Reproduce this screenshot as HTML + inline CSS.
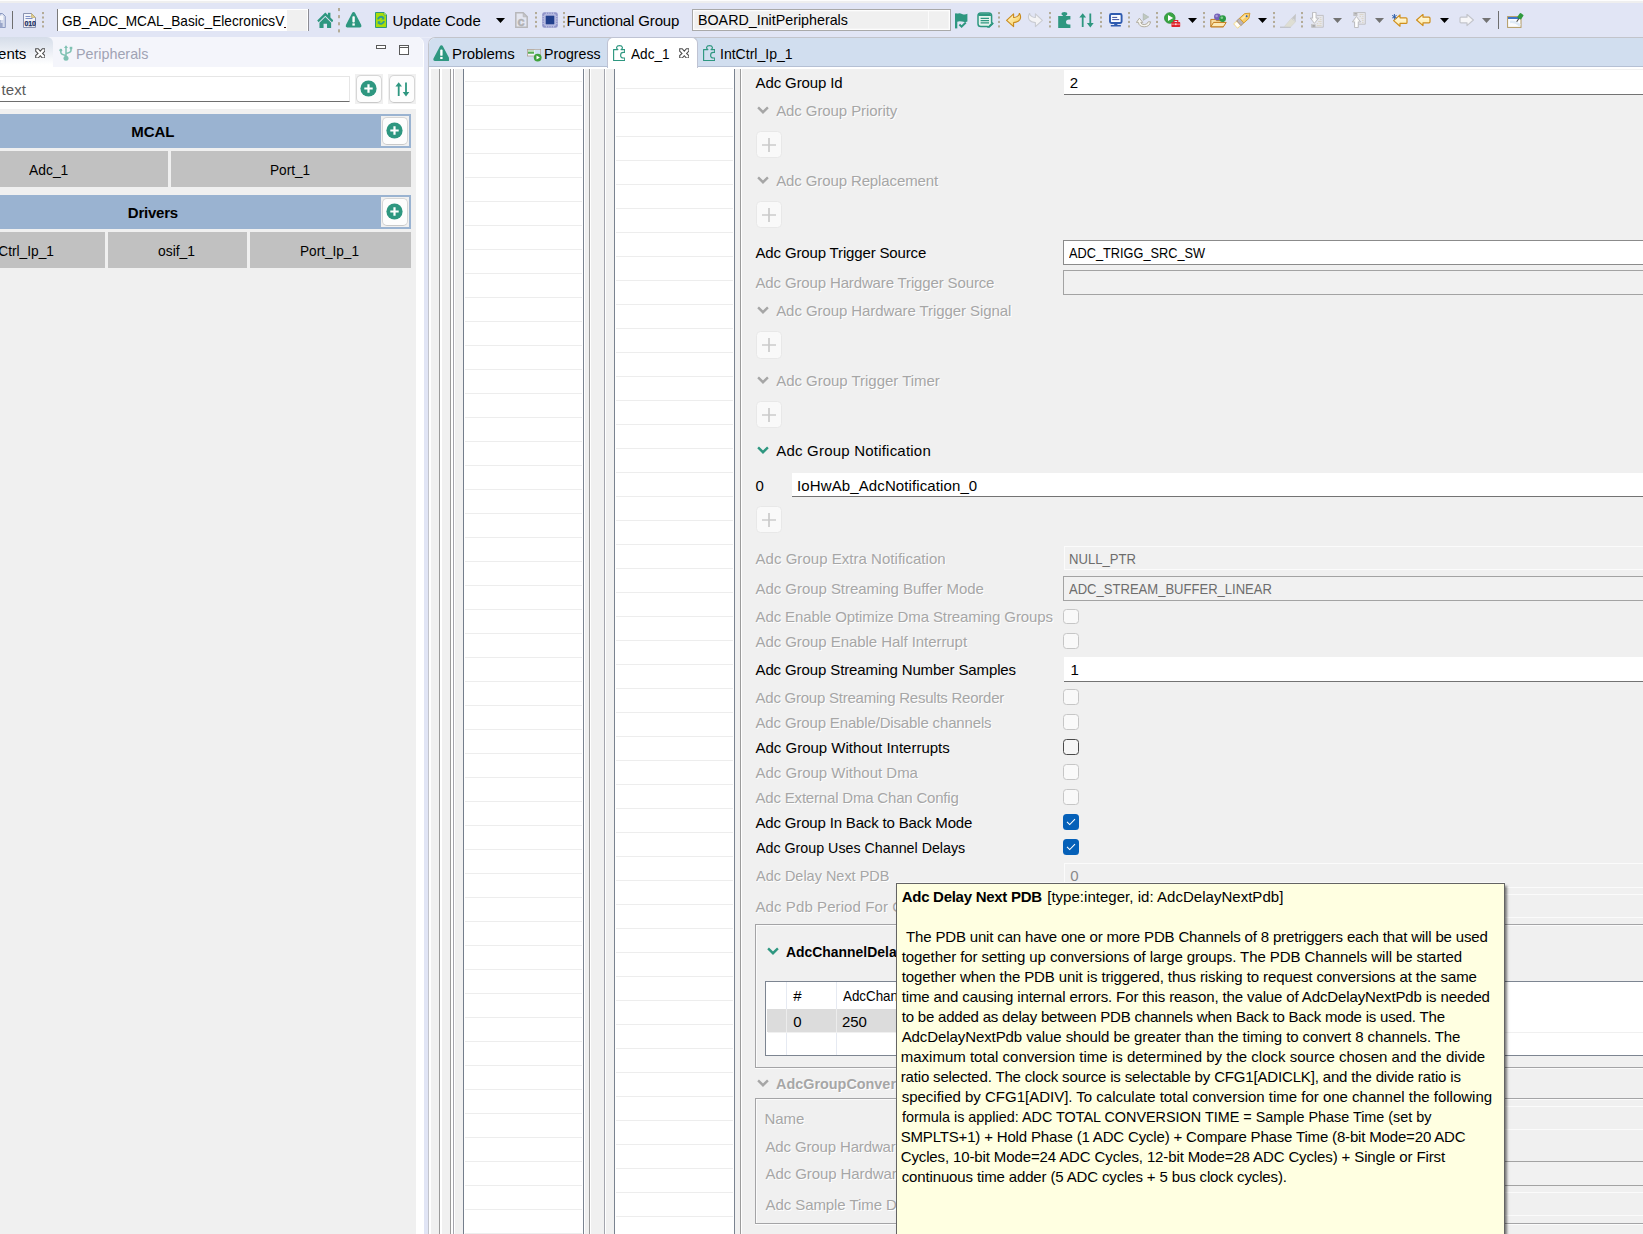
<!DOCTYPE html>
<html lang="en">
<head>
<meta charset="utf-8">
<title>Adc_1 - Peripherals</title>
<style>
html,body{margin:0;padding:0;background:#e1e5f5;}
body{width:1643px;height:1234px;overflow:hidden;font-family:"Liberation Sans",sans-serif;font-size:15px;color:#000;}
#root{position:relative;width:1643px;height:1234px;overflow:hidden;background:#e1e5f5;}
#root div,#root span.t,#root svg{position:absolute;}
#root div{box-sizing:border-box;}
span.t{white-space:pre;line-height:20px;}
span.d{color:#a0a0a0;text-shadow:1px 1px 0 #fff;}
.hl{height:1px;background:#ededed;}
#root div.grp{left:0;top:0;width:0;height:0;}
</style>
</head>
<body>
<div id="root">
<div class="grp" id="toolbar" role="toolbar" aria-label="Main toolbar">
<div style="left:0px;top:0px;width:1643px;height:1px;background:#fdfdfd"></div>
<div style="left:0px;top:1px;width:1643px;height:2px;background:linear-gradient(#efefef 80%,#e8eaf2)"></div>
<div style="left:0px;top:3px;width:1643px;height:34px;background:#e1e5f5"></div>
<svg style="left:0;top:13px" width="7" height="15" viewBox="0 0 7 15"><path d="M0 .5H2.500L5.300 3.300V14.500H0Z" fill="#d5dbec" stroke="#8c9ac2"/><rect x="0" y="2.500" width="3.200" height="4.500" fill="#f6f7fb"/><rect x="0" y="10" width="2.600" height="4.500" fill="#9aa6ca"/></svg>
<div style="left:12px;top:11px;width:1px;height:18px;background:#6f6f6f"></div>
<svg style="left:23px;top:13px" width="13" height="15" viewBox="0 0 13 15"><path d="M.5 .5H8.5L12.5 4.5V14.5H.5Z" fill="#f2f4fa" stroke="#8a93b0"/><path d="M8.5 .5V4.5H12.5Z" fill="#e2cf8a" stroke="#b9a66a" stroke-width=".6"/><path d="M2.5 3.5H7.5M2.5 5.5H9.5" stroke="#7d8fc4"/><text x="1.400" y="12.900" style="font:bold 7px 'Liberation Sans',sans-serif" fill="#1c2f66" stroke="#1c2f66" stroke-width=".25" textLength="11.600">010</text></svg>
<svg style="left:42px;top:12.1px" width="2" height="26" viewBox="0 0 2 26"><rect x=".2" y="0.0" width="1.600" height="2.1" fill="#a89d80"/><rect x=".2" y="4.45" width="1.600" height="2.1" fill="#a89d80"/><rect x=".2" y="8.9" width="1.600" height="2.1" fill="#a89d80"/><rect x=".2" y="13.35" width="1.600" height="2.1" fill="#a89d80"/></svg>
<div style="left:57px;top:9px;width:252px;height:22px;background:#fff;border-left:1px solid #7a7a7a;border-right:1px solid #8c8c94"></div>
<div style="left:287px;top:10px;width:20px;height:21px;background:#f0f0f0"></div>
<span class="t" style="left:62.29px;top:11px;transform:scaleX(0.9099);transform-origin:0 0;">GB_ADC_MCAL_Basic_ElecronicsV</span>
<div style="left:283.6px;top:27px;width:2.8px;height:1.2px;background:#3a1010"></div>
<svg style="left:316.600px;top:11.800px" width="16.600" height="16.400" viewBox="0 0 16 16"><path d="M8 .5L.1 8.300 1.500 9.900 8 3.600 14.500 9.900 15.900 8.300 13 5.400V.8H10.600V3Z" fill="#2e9780"/><path d="M8 4.900L2.300 10.400V16H6.300V11.400H9.700V16H13.700V10.400Z" fill="#2e9780"/></svg>
<svg style="left:338px;top:8px" width="2" height="26" viewBox="0 0 2 26"><rect x=".2" y="0.0" width="1.600" height="3.1" fill="#a89d80"/><rect x=".2" y="7.1" width="1.600" height="3.1" fill="#a89d80"/><rect x=".2" y="14.2" width="1.600" height="3.1" fill="#a89d80"/><rect x=".2" y="21.3" width="1.600" height="3.1" fill="#a89d80"/></svg>
<svg style="left:345.400px;top:11.400px" width="17.200" height="17" viewBox="0 0 17 17"><path d="M8.500 1Q9.500 1 10 2L16.200 14Q16.900 16.200 15 16.400H2Q.1 16.200 .8 14L7 2Q7.500 1 8.500 1Z" fill="#2e9780"/><rect x="7.300" y="5.200" width="2.400" height="6.200" rx=".9" fill="#fff"/><rect x="7.300" y="12.400" width="2.400" height="2.200" fill="#fff"/></svg>
<svg style="left:375px;top:12px" width="12" height="16" viewBox="0 0 12 16"><path d="M.5 .5H9L11.500 3V15.500H.5Z" fill="#a8de08" stroke="#2e9780" stroke-width="1"/><path d="M9 .5V3H11.500" fill="#d4ef70" stroke="#2e9780" stroke-width=".6"/><path d="M3 7.400A3.100 3.100 0 0 1 8.200 5.700M9 9.200A3.100 3.100 0 0 1 3.800 10.900" fill="none" stroke="#2e9c92" stroke-width="2"/><path d="M9.300 4.200V7.400H6.200ZM2.700 12.400V9.200H5.800Z" fill="#2e9c92"/></svg>
<span class="t" style="left:392.40px;top:11px;">Update Code</span>
<svg style="left:496px;top:18px" width="9" height="5" viewBox="0 0 9 5"><path d="M0 0H9L4.5 5Z" fill="#000"/></svg>
<svg style="left:515px;top:12px" width="13" height="16" viewBox="0 0 13 16"><path d="M.8 .8H8.200L12.200 4.800V15.200H.8Z" fill="#e4e6f0" stroke="#b7b7ba" stroke-width="1.500"/><path d="M8.200 .8V4.800H12.200Z" fill="#c4c4c8" stroke="#b7b7ba" stroke-width=".8"/><text x="2.400" y="14" style="font:bold 13px 'Liberation Sans',sans-serif" fill="#b1b1b3" stroke="#b1b1b3" stroke-width=".4">c</text></svg>
<svg style="left:535px;top:12.1px" width="2" height="26" viewBox="0 0 2 26"><rect x=".2" y="0.0" width="1.600" height="2.1" fill="#a89d80"/><rect x=".2" y="4.45" width="1.600" height="2.1" fill="#a89d80"/><rect x=".2" y="8.9" width="1.600" height="2.1" fill="#a89d80"/><rect x=".2" y="13.35" width="1.600" height="2.1" fill="#a89d80"/></svg>
<svg style="left:542px;top:12px" width="16" height="16" viewBox="0 0 16 16"><rect x=".2" y=".2" width="15.600" height="15.600" rx="2.200" fill="#9195c9"/><path d="M4.400 .4V15.600M6.800 .4V15.600M9.200 .4V15.600M11.600 .4V15.600M.4 4.400H15.600M.4 6.800H15.600M.4 9.200H15.600M.4 11.600H15.600" stroke="#c4c7e6" stroke-width=".9"/><rect x="2" y="2" width="12" height="12" fill="#8f94cc"/><rect x="2.900" y="2.900" width="10.200" height="10.200" fill="none" stroke="#d4d7ee" stroke-width=".9"/><rect x="3.800" y="3.800" width="8.400" height="8.400" fill="#22408c"/></svg>
<svg style="left:563px;top:12.1px" width="2" height="26" viewBox="0 0 2 26"><rect x=".2" y="0.0" width="1.600" height="2.1" fill="#a89d80"/><rect x=".2" y="4.45" width="1.600" height="2.1" fill="#a89d80"/><rect x=".2" y="8.9" width="1.600" height="2.1" fill="#a89d80"/><rect x=".2" y="13.35" width="1.600" height="2.1" fill="#a89d80"/></svg>
<span class="t" style="left:566.50px;top:11px;letter-spacing:-0.147px;">Functional Group</span>
<div style="left:692px;top:9px;width:259px;height:22px;background:#f0f0f0;border:1px solid #a9a9a9;box-shadow:inset 0 0 0 1.300px #fdfdfd"></div>
<div style="left:928px;top:11px;width:1px;height:18px;background:#fbfbfb"></div>
<span class="t" style="left:697.65px;top:10px;transform:scaleX(0.9513);transform-origin:0 0;">BOARD_InitPeripherals</span>
<svg style="left:954.800px;top:12.600px" width="13" height="16" viewBox="0 0 13 16"><path d="M0 .4H2.300V15.400H0Z" fill="#2e9780"/><path d="M2 .8Q4.600 -.2 7 .9Q9.800 2 12.400 .8V8.400Q9.800 9.600 7 8.600Q4.600 7.600 2 8.800Z" fill="#2e9780"/><path d="M4.400 11.500L6.600 13.700 10.800 9.500" fill="none" stroke="#2e9780" stroke-width="1.900"/></svg>
<svg style="left:976.600px;top:11.800px" width="17" height="16" viewBox="0 0 17 16"><path d="M3.800 .9H11.800Q14.600 .9 14.600 3.700V10.300L15.800 11.400 12.200 15H10.800L10.400 14.600H3.800Q1 14.600 1 11.800V3.700Q1 .9 3.800 .9Z" fill="#e4f3ee" stroke="#2e9780" stroke-width="1.500"/><path d="M1.600 4V3.400Q1.600 1.500 3.800 1.500H11.800Q14 1.500 14 3.400V4Z" fill="#2e9780"/><path d="M3.600 6.300H12M3.600 8.600H12M3.600 10.900H12" stroke="#2e9780" stroke-width="1.300"/><path d="M10.600 14.800L14.400 11 15.800 12.400 12 15.600Z" fill="#2e9780"/></svg>
<svg style="left:998px;top:12.1px" width="2" height="26" viewBox="0 0 2 26"><rect x=".2" y="0.0" width="1.600" height="2.1" fill="#a89d80"/><rect x=".2" y="4.45" width="1.600" height="2.1" fill="#a89d80"/><rect x=".2" y="8.9" width="1.600" height="2.1" fill="#a89d80"/><rect x=".2" y="13.35" width="1.600" height="2.1" fill="#a89d80"/></svg>
<svg style="left:1006px;top:12.600px" width="16" height="15" viewBox="0 0 16 15"><defs><linearGradient id="gu" x1="0" y1="0" x2="1" y2="1"><stop offset="0" stop-color="#fff6d6"/><stop offset=".55" stop-color="#fbe08c"/><stop offset="1" stop-color="#f2b83c"/></linearGradient></defs><path d="M.6 7.400L7.600 .8V4.400Q9.600 4.600 11.400 3.400Q13.400 2 13.400 .2Q15.600 3.800 13.800 6.800Q12 9.400 7.600 9.600V13.600Z" fill="url(#gu)" stroke="#c98a1c" stroke-width="1.100" stroke-linejoin="round"/></svg>
<svg style="left:1027px;top:12.600px" width="16" height="15" viewBox="0 0 16 15"><g transform="translate(16,0) scale(-1,1)"><path d="M.6 7.400L7.600 .8V4.400Q9.600 4.600 11.400 3.400Q13.400 2 13.400 .2Q15.600 3.800 13.800 6.800Q12 9.400 7.600 9.600V13.600Z" fill="#f3f3f5" stroke="#c9cbd1" stroke-width="1.100" stroke-linejoin="round"/></g></svg>
<svg style="left:1049px;top:12.1px" width="2" height="26" viewBox="0 0 2 26"><rect x=".2" y="0.0" width="1.600" height="2.1" fill="#a89d80"/><rect x=".2" y="4.45" width="1.600" height="2.1" fill="#a89d80"/><rect x=".2" y="8.9" width="1.600" height="2.1" fill="#a89d80"/><rect x=".2" y="13.35" width="1.600" height="2.1" fill="#a89d80"/></svg>
<svg style="left:1057.600px;top:12px" width="13" height="16" viewBox="0 0 13 16"><path d="M.2 4.100H5V3.500Q3.500 3.100 3.500 2Q3.500 .1 6.400 .1Q9.300 .1 9.300 2Q9.300 3.100 7.800 3.500V4.100H12.400V7.600H11Q8 7.600 8 10.100Q8 12.600 11 12.600H12.400V15.900H.2Z" fill="#2e9780"/></svg>
<svg style="left:1079.400px;top:12.700px" width="15" height="15" viewBox="0 0 15 15"><path d="M3.700 .2L.3 4.500H2.800V14H4.600V4.500H7.100ZM11.300 14.400L7.900 10.100H10.400V.6H12.200V10.100H14.700Z" fill="#2e9780"/></svg>
<svg style="left:1100px;top:12.1px" width="2" height="26" viewBox="0 0 2 26"><rect x=".2" y="0.0" width="1.600" height="2.1" fill="#a89d80"/><rect x=".2" y="4.45" width="1.600" height="2.1" fill="#a89d80"/><rect x=".2" y="8.9" width="1.600" height="2.1" fill="#a89d80"/><rect x=".2" y="13.35" width="1.600" height="2.1" fill="#a89d80"/></svg>
<svg style="left:1108.600px;top:12.700px" width="14" height="14" viewBox="0 0 14 14"><rect x="1" y="1" width="11.600" height="9" rx="1.400" fill="#fafcff" stroke="#2f5bb0" stroke-width="1.900"/><path d="M3.200 4.400H8.200M3.200 6.600H10.200" stroke="#3b4f9e" stroke-width="1"/><path d="M5.200 10.600H8.400V12H11.800V13.400H1.800V12H5.200Z" fill="#2f5bb0"/></svg>
<svg style="left:1128px;top:12.1px" width="2" height="26" viewBox="0 0 2 26"><rect x=".2" y="0.0" width="1.600" height="2.1" fill="#a89d80"/><rect x=".2" y="4.45" width="1.600" height="2.1" fill="#a89d80"/><rect x=".2" y="8.9" width="1.600" height="2.1" fill="#a89d80"/><rect x=".2" y="13.35" width="1.600" height="2.1" fill="#a89d80"/></svg>
<svg style="left:1136px;top:12.500px" width="16" height="15" viewBox="0 0 16 15"><path d="M7.200 .6L12.800 4 7.200 7.400Z" fill="#bfc8c0" stroke="#a9b3ab" stroke-width=".6"/><path d="M3.400 5.200L.4 9.400H2.400Q3 13.800 8.200 13.800Q13.600 13.800 14.600 8.800H12.200Q11.400 11.600 8.200 11.600Q5.200 11.600 4.800 9.400H6.800Z" fill="#f6f5f0" stroke="#aaa697" stroke-width=".9" stroke-linejoin="round"/></svg>
<svg style="left:1156px;top:12.1px" width="2" height="26" viewBox="0 0 2 26"><rect x=".2" y="0.0" width="1.600" height="2.1" fill="#a89d80"/><rect x=".2" y="4.45" width="1.600" height="2.1" fill="#a89d80"/><rect x=".2" y="8.9" width="1.600" height="2.1" fill="#a89d80"/><rect x=".2" y="13.35" width="1.600" height="2.1" fill="#a89d80"/></svg>
<svg style="left:1163.500px;top:11.500px" width="17" height="16" viewBox="0 0 17 16"><circle cx="5.800" cy="6" r="5.300" fill="#3aa644"/><circle cx="5.800" cy="6" r="5.300" fill="none" stroke="#2b8c36" stroke-width=".8"/><path d="M4 2.900L9.200 6 4 9.100Z" fill="#fff"/><rect x="7.400" y="9.900" width="8.800" height="5.200" rx=".8" fill="#e0222a"/><path d="M9.900 9.900V8.500H13.700V9.900" fill="none" stroke="#e0222a" stroke-width="1.200"/><path d="M7.400 12.200H16.200" stroke="#f6b0b0" stroke-width=".8"/><rect x="11" y="11.400" width="1.600" height="1.700" fill="#fbd0d0"/></svg>
<svg style="left:1188px;top:18px" width="9" height="5" viewBox="0 0 9 5"><path d="M0 0H9L4.5 5Z" fill="#000"/></svg>
<svg style="left:1203px;top:12.1px" width="2" height="26" viewBox="0 0 2 26"><rect x=".2" y="0.0" width="1.600" height="2.1" fill="#a89d80"/><rect x=".2" y="4.45" width="1.600" height="2.1" fill="#a89d80"/><rect x=".2" y="8.9" width="1.600" height="2.1" fill="#a89d80"/><rect x=".2" y="13.35" width="1.600" height="2.1" fill="#a89d80"/></svg>
<svg style="left:1210px;top:12.500px" width="17" height="15" viewBox="0 0 17 15"><path d="M.8 6.400H5.400L6.400 7.600H13.400V13.800H.8Z" fill="#f6dca0" stroke="#c27a1a" stroke-width="1"/><path d="M.8 13.800L3.600 9.400H16.200L13.400 13.800Z" fill="#fbe9b8" stroke="#c27a1a" stroke-width="1" stroke-linejoin="round"/><circle cx="7.400" cy="3.800" r="3.400" fill="#7461b8"/><circle cx="6.600" cy="3" r="1.300" fill="#a79ad6"/><circle cx="12.600" cy="5.600" r="3.400" fill="#2c9a46"/><circle cx="11.800" cy="4.800" r="1.300" fill="#7fcf8e"/></svg>
<svg style="left:1232px;top:10px" width="20" height="20" viewBox="0 0 20 20"><g transform="rotate(-42 10 10.300)"><path d="M1.400 7.300H5.600V13.300H1.400Z" fill="#fffbe0" stroke="#f0d078" stroke-width=".7"/><path d="M2 8.600H5.600V12H2Z" fill="#fff"/><rect x="5.600" y="7.100" width="4" height="6.400" fill="#b9b4ba" stroke="#a0845c" stroke-width=".7"/><path d="M9.600 7.100H16.400L20.600 10.300 16.400 13.500H9.600Z" fill="#f8cd6a" stroke="#d49a2c" stroke-width=".9" stroke-linejoin="round"/><path d="M10.400 8.400H16L18 10.300H10.400Z" fill="#fce6a8"/><circle cx="16.200" cy="10.300" r="1" fill="#2f5fb4"/></g></svg>
<svg style="left:1258px;top:18px" width="9" height="5" viewBox="0 0 9 5"><path d="M0 0H9L4.5 5Z" fill="#000"/></svg>
<svg style="left:1273px;top:12.1px" width="2" height="26" viewBox="0 0 2 26"><rect x=".2" y="0.0" width="1.600" height="2.1" fill="#a89d80"/><rect x=".2" y="4.45" width="1.600" height="2.1" fill="#a89d80"/><rect x=".2" y="8.9" width="1.600" height="2.1" fill="#a89d80"/><rect x=".2" y="13.35" width="1.600" height="2.1" fill="#a89d80"/></svg>
<svg style="left:1280px;top:12.500px" width="17" height="15" viewBox="0 0 17 15"><path d="M0 14.200H10.700" stroke="#b4b5ba" stroke-width="1"/><path d="M4.300 13.600L11.300 5.400 15.600 8.700 10.700 13.900Z" fill="#deded4" stroke="#cfcfc8" stroke-width=".5"/><path d="M11.300 5.400L15.900 .7 15.600 8.700Z" fill="#c4c5c6"/><path d="M12.600 5.600L14.800 7.400" stroke="#e4e4e2" stroke-width=".8"/></svg>
<svg style="left:1301px;top:12.1px" width="2" height="26" viewBox="0 0 2 26"><rect x=".2" y="0.0" width="1.600" height="2.1" fill="#a89d80"/><rect x=".2" y="4.45" width="1.600" height="2.1" fill="#a89d80"/><rect x=".2" y="8.9" width="1.600" height="2.1" fill="#a89d80"/><rect x=".2" y="13.35" width="1.600" height="2.1" fill="#a89d80"/></svg>
<svg style="left:1310px;top:12px" width="14" height="16" viewBox="0 0 14 16"><defs><linearGradient id="ga" x1="0" y1="0" x2="1" y2="0"><stop offset="0" stop-color="#dedede"/><stop offset=".5" stop-color="#fff"/><stop offset="1" stop-color="#e8e8e8"/></linearGradient></defs><path d="M6.700 3.400H13.300V15.200H1.700V12" fill="#e6e7ee" stroke="#bdbdc0" stroke-width=".9"/><rect x="1.300" y="12.300" width="4.400" height="3.300" fill="#c2c2c4"/><rect x="2.600" y="13.500" width="2.200" height=".9" fill="#8d8d90"/><path d="M9.600 5.600H11.400M9.800 7.600H11.600M8.200 9.600H11.600M6.800 11.600H8.200M9.600 11.600H11.600M6.800 13.600H11.600" stroke="#d9d3c2" stroke-width=".9"/><path d="M2.500 .4H6.100V6.100H8.600L4.400 11.300 .3 6.100H2.500Z" fill="url(#ga)" stroke="#b9b9bc" stroke-width=".9" stroke-linejoin="round"/></svg>
<svg style="left:1333px;top:18px" width="9" height="5" viewBox="0 0 9 5"><path d="M0 0H9L4.5 5Z" fill="#737373"/></svg>
<svg style="left:1352px;top:12px" width="14" height="16" viewBox="0 0 14 16"><path d="M1.700 .5H13.300V12.200H6.600" fill="#e6e7ee" stroke="#bdbdc0" stroke-width=".9"/><rect x="1.300" y=".2" width="4.200" height="3.800" fill="#c2c2c4"/><rect x="2.600" y="1.200" width="2.200" height=".9" fill="#a5a5a8"/><path d="M7.600 2.400H11.600M7.600 4.400H9M10.200 4.400H11.600M9.400 6.400H11.600M10 8.400H11.600M10 10.400H11.600" stroke="#d9d3c2" stroke-width=".9"/><path d="M4.400 4.500L8.600 9.900H6.300V15.500H2.500V9.900H.3Z" fill="url(#ga)" stroke="#b9b9bc" stroke-width=".9" stroke-linejoin="round"/></svg>
<svg style="left:1375px;top:18px" width="9" height="5" viewBox="0 0 9 5"><path d="M0 0H9L4.5 5Z" fill="#737373"/></svg>
<svg style="left:1391.400px;top:13.900px" width="17" height="13" viewBox="0 0 17 13"><defs><linearGradient id="gl" x1="0" y1="0" x2="0" y2="1"><stop offset="0" stop-color="#fffbe6"/><stop offset="1" stop-color="#fde9a8"/></linearGradient></defs><g transform="translate(2,.600)"><path d="M.6 6L7 .4V3.200H13Q14 3.200 14 4.200V7.800Q14 8.800 13 8.800H7V11.600Z" fill="url(#gl)" stroke="#cf8f1c" stroke-width="1.200" stroke-linejoin="round"/></g><path d="M3.400 0V5.400M1.200 1.400L5.600 4M5.600 1.400L1.200 4" stroke="#2f5fa8" stroke-width="1"/></svg>
<svg style="left:1416.400px;top:14px" width="15" height="13" viewBox="0 0 15 13"><path d="M.6 6L7 .4V3.200H13Q14 3.200 14 4.200V7.800Q14 8.800 13 8.800H7V11.600Z" fill="url(#gl)" stroke="#cf8f1c" stroke-width="1.200" stroke-linejoin="round"/></svg>
<svg style="left:1440px;top:18px" width="9" height="5" viewBox="0 0 9 5"><path d="M0 0H9L4.5 5Z" fill="#000"/></svg>
<svg style="left:1458.700px;top:14px" width="15" height="13" viewBox="0 0 15 13"><g transform="translate(15,0) scale(-1,1)"><path d="M.6 6L7 .4V3.200H13Q14 3.200 14 4.200V7.800Q14 8.800 13 8.800H7V11.600Z" fill="#f6f6f8" stroke="#c3c5cb" stroke-width="1.200" stroke-linejoin="round"/></g></svg>
<svg style="left:1482px;top:18px" width="9" height="5" viewBox="0 0 9 5"><path d="M0 0H9L4.5 5Z" fill="#737373"/></svg>
<div style="left:1498px;top:11px;width:1px;height:18px;background:#6f6f6f"></div>
<svg style="left:1506.500px;top:13px" width="17" height="15" viewBox="0 0 17 15"><rect x=".6" y="3.600" width="13.400" height="10.800" fill="#fbfcfe" stroke="#b39a62" stroke-width="1"/><rect x="1" y="4" width="12.600" height="2" fill="#3f74c8"/><path d="M3 9Q8 8 13 12.500" stroke="#dfeaf6" stroke-width="2.400" fill="none"/><g transform="rotate(35 12.500 4.500)"><rect x="10.400" y=".2" width="4.400" height="5.600" rx="1" fill="#2f9a3e"/><path d="M12.600 5.800V9.600" stroke="#444" stroke-width="1"/></g></svg>
<div style="left:0px;top:37px;width:1643px;height:1px;background:#e9ecf8"></div>
</div>
<div class="grp" id="components-view" role="region" aria-label="Components">
<div style="left:0px;top:37px;width:424.2px;height:1200px;background:#fff;border-top-right-radius:7px"></div>
<div style="left:0px;top:37px;width:422.8px;height:29.6px;background:#f4f5fb;border-top-right-radius:6px"></div>
<div style="left:-6px;top:37px;width:59px;height:30px;background:linear-gradient(#d5dde9,#e9edf4 45%,#fff 92%);border-top-right-radius:6px"></div>
<span class="t" style="left:-58.50px;top:44px;letter-spacing:-0.022px;">Components</span>
<svg style="left:34.500px;top:47.500px" width="10.600" height="10.800" viewBox="0 0 10.600 10.800"><path d="M.7 .7H3.200L5.300 3.100 7.400 .7H9.900V3.200L7.600 5.400 9.900 7.600V10.100H7.400L5.300 7.700 3.200 10.100H.7V7.600L3 5.400 .7 3.200Z" fill="#fff" stroke="#4b4b4b" stroke-width="1.050" stroke-linejoin="miter"/></svg>
<svg style="left:58.500px;top:45.400px" width="14" height="16" viewBox="0 0 14 16"><g fill="none" stroke="#7fc1b2" stroke-width="1.500"><path d="M7 2.500V12"/><path d="M1.800 5.800V7.200Q1.800 9.400 7 10.400"/><path d="M12 3.600V5.400Q12 7.200 7 8.400"/></g><path d="M7 .2L9 3H5Z" fill="#7fc1b2"/><circle cx="1.800" cy="5.200" r="1.400" fill="#7fc1b2"/><rect x="10.700" y="1.800" width="2.600" height="2.400" fill="#7fc1b2"/><circle cx="7" cy="13.300" r="2.500" fill="#7fc1b2"/></svg>
<span class="t" style="left:75.95px;top:44px;transform:scaleX(0.9547);transform-origin:0 0;color:#a0a3b4;">Peripherals</span>
<div style="left:376px;top:45px;width:10px;height:4px;border:1px solid #5a5a5a;background:#fff"></div>
<div style="left:399px;top:45px;width:10px;height:10px;border:1px solid #5a5a5a;background:#fff"></div>
<div style="left:399px;top:47px;width:10px;height:1px;background:#5a5a5a"></div>
<div style="left:-2px;top:76px;width:351.5px;height:25.7px;background:#fff;border:1px solid #e6e6e6;border-bottom:1.400px solid #6e6e6e"></div>
<span class="t" style="left:1.50px;top:80px;color:#5a5a5a;letter-spacing:0.100px;">text</span>
<div style="left:355px;top:74px;width:28px;height:30px;background:#f0f0f0"></div>
<div style="left:356px;top:75px;width:26px;height:28px;background:#fdfdfd;border:1px solid #d6d6d6;border-bottom-color:#c9c9c9;border-radius:5px"></div>
<svg style="left:360.4px;top:80.4px" width="17" height="17" viewBox="0 0 17 17"><circle cx="8.500" cy="8.500" r="8.100" fill="#2e9780"/><path d="M8.500 4.300V12.700M4.300 8.500H12.700" stroke="#fff" stroke-width="2.200"/></svg>
<div style="left:388px;top:74px;width:28px;height:30px;background:#f0f0f0"></div>
<div style="left:389px;top:75px;width:26px;height:28px;background:#fdfdfd;border:1px solid #d6d6d6;border-bottom-color:#c9c9c9;border-radius:5px"></div>
<svg style="left:394.600px;top:81.700px" width="15" height="15" viewBox="0 0 15 15"><path d="M3.700 .2L.4 4.600H2.800V14H4.600V4.600H7ZM11 14.400L7.700 10H10.100V.6H11.900V10H14.300Z" fill="#2e9780"/></svg>
<div style="left:0px;top:109px;width:416px;height:1130px;background:#f0f0f0"></div>
<div style="left:0px;top:114px;width:411px;height:34px;background:#9ab3d1"></div>
<span class="t" style="left:131.20px;top:122px;font-weight:bold;">MCAL</span>
<div style="left:381px;top:116px;width:28px;height:30px;background:#f0f0f0"></div>
<div style="left:382px;top:117px;width:26px;height:28px;background:#fdfdfd;border:1px solid #d6d6d6;border-bottom-color:#c9c9c9;border-radius:5px"></div>
<svg style="left:386.4px;top:122.4px" width="17" height="17" viewBox="0 0 17 17"><circle cx="8.500" cy="8.500" r="8.100" fill="#2e9780"/><path d="M8.500 4.300V12.700M4.300 8.500H12.700" stroke="#fff" stroke-width="2.200"/></svg>
<div style="left:0px;top:151px;width:168px;height:36px;background:#c1c1c1"></div>
<div style="left:171px;top:151px;width:240px;height:36px;background:#c1c1c1"></div>
<span class="t" style="left:29.20px;top:160px;transform:scaleX(0.9238);transform-origin:0 0;">Adc_1</span>
<span class="t" style="left:270.09px;top:160px;transform:scaleX(0.9070);transform-origin:0 0;">Port_1</span>
<div style="left:0px;top:195px;width:411px;height:34px;background:#9ab3d1"></div>
<span class="t" style="left:127.80px;top:203px;font-weight:bold;letter-spacing:-0.217px;">Drivers</span>
<div style="left:381px;top:197px;width:28px;height:30px;background:#f0f0f0"></div>
<div style="left:382px;top:198px;width:26px;height:28px;background:#fdfdfd;border:1px solid #d6d6d6;border-bottom-color:#c9c9c9;border-radius:5px"></div>
<svg style="left:386.4px;top:203.4px" width="17" height="17" viewBox="0 0 17 17"><circle cx="8.500" cy="8.500" r="8.100" fill="#2e9780"/><path d="M8.500 4.300V12.700M4.300 8.500H12.700" stroke="#fff" stroke-width="2.200"/></svg>
<div style="left:0px;top:232px;width:105px;height:36px;background:#c1c1c1"></div>
<div style="left:108px;top:232px;width:139px;height:36px;background:#c1c1c1"></div>
<div style="left:250px;top:232px;width:161px;height:36px;background:#c1c1c1"></div>
<span class="t" style="left:-17.41px;top:241px;transform:scaleX(0.9145);transform-origin:0 0;">IntCtrl_Ip_1</span>
<span class="t" style="left:158.00px;top:241px;transform:scaleX(0.9250);transform-origin:0 0;">osif_1</span>
<span class="t" style="left:300.09px;top:241px;transform:scaleX(0.9062);transform-origin:0 0;">Port_Ip_1</span>
</div>
<div class="grp" id="editor-area" role="region" aria-label="Editor">
<div style="left:428px;top:37px;width:1225px;height:1210px;background:#fff;border-top-left-radius:7px;border:1px solid #c2c4cb;border-right:none"></div>
<div style="left:429px;top:38px;width:1220px;height:28px;background:#d1deef;border-top-left-radius:6px"></div>
<div style="left:429px;top:66px;width:1220px;height:1px;background:#b5c0d4"></div>
<div style="left:431px;top:69px;width:1220px;height:1170px;background:#f0f0f0"></div>
<div style="left:439px;top:69px;width:1px;height:1170px;background:#9b9b9b"></div>
<div style="left:440px;top:69px;width:2px;height:1170px;background:#fff"></div>
<div style="left:450px;top:69px;width:1px;height:1170px;background:#9b9b9b"></div>
<div style="left:451px;top:69px;width:2px;height:1170px;background:#fff"></div>
<div style="left:453px;top:69px;width:1px;height:1170px;background:#a5a5ad"></div>
<div style="left:454px;top:69px;width:1.2px;height:1170px;background:#fff"></div>
<div style="left:463px;top:69px;width:1px;height:1170px;background:#747e8c"></div>
<div style="left:464px;top:69px;width:119px;height:1170px;background:#fff"></div>
<div style="left:583px;top:69px;width:1px;height:1170px;background:#7a8390"></div>
<div style="left:584px;top:69px;width:0.8px;height:1170px;background:#fff"></div>
<div style="left:589px;top:69px;width:1px;height:1170px;background:#9b9b9b"></div>
<div style="left:590px;top:69px;width:1.2px;height:1170px;background:#fff"></div>
<div style="left:604px;top:69px;width:1px;height:1170px;background:#a3a5ad"></div>
<div style="left:605px;top:69px;width:1.1px;height:1170px;background:#fff"></div>
<div style="left:614px;top:69px;width:1px;height:1170px;background:#7a8390"></div>
<div style="left:615px;top:69px;width:119px;height:1170px;background:#fff"></div>
<div style="left:734px;top:69px;width:1px;height:1170px;background:#7a8390"></div>
<div style="left:740px;top:69px;width:1px;height:1170px;background:#9b9b9b"></div>
<div style="left:741px;top:69px;width:1.1px;height:1170px;background:#fff"></div>
<div class="hl" style="left:465.300px;top:81px;width:116.400px"></div><div class="hl" style="left:465.300px;top:105px;width:116.400px"></div><div class="hl" style="left:465.300px;top:129px;width:116.400px"></div><div class="hl" style="left:465.300px;top:153px;width:116.400px"></div><div class="hl" style="left:465.300px;top:177px;width:116.400px"></div><div class="hl" style="left:465.300px;top:201px;width:116.400px"></div><div class="hl" style="left:465.300px;top:225px;width:116.400px"></div><div class="hl" style="left:465.300px;top:249px;width:116.400px"></div><div class="hl" style="left:465.300px;top:273px;width:116.400px"></div><div class="hl" style="left:465.300px;top:297px;width:116.400px"></div><div class="hl" style="left:465.300px;top:321px;width:116.400px"></div><div class="hl" style="left:465.300px;top:345px;width:116.400px"></div><div class="hl" style="left:465.300px;top:369px;width:116.400px"></div><div class="hl" style="left:465.300px;top:393px;width:116.400px"></div><div class="hl" style="left:465.300px;top:417px;width:116.400px"></div><div class="hl" style="left:465.300px;top:441px;width:116.400px"></div><div class="hl" style="left:465.300px;top:465px;width:116.400px"></div><div class="hl" style="left:465.300px;top:489px;width:116.400px"></div><div class="hl" style="left:465.300px;top:513px;width:116.400px"></div><div class="hl" style="left:465.300px;top:537px;width:116.400px"></div><div class="hl" style="left:465.300px;top:561px;width:116.400px"></div><div class="hl" style="left:465.300px;top:585px;width:116.400px"></div><div class="hl" style="left:465.300px;top:609px;width:116.400px"></div><div class="hl" style="left:465.300px;top:633px;width:116.400px"></div><div class="hl" style="left:465.300px;top:657px;width:116.400px"></div><div class="hl" style="left:465.300px;top:681px;width:116.400px"></div><div class="hl" style="left:465.300px;top:705px;width:116.400px"></div><div class="hl" style="left:465.300px;top:729px;width:116.400px"></div><div class="hl" style="left:465.300px;top:753px;width:116.400px"></div><div class="hl" style="left:465.300px;top:777px;width:116.400px"></div><div class="hl" style="left:465.300px;top:801px;width:116.400px"></div><div class="hl" style="left:465.300px;top:825px;width:116.400px"></div><div class="hl" style="left:465.300px;top:849px;width:116.400px"></div><div class="hl" style="left:465.300px;top:873px;width:116.400px"></div><div class="hl" style="left:465.300px;top:897px;width:116.400px"></div><div class="hl" style="left:465.300px;top:921px;width:116.400px"></div><div class="hl" style="left:465.300px;top:945px;width:116.400px"></div><div class="hl" style="left:465.300px;top:969px;width:116.400px"></div><div class="hl" style="left:465.300px;top:993px;width:116.400px"></div><div class="hl" style="left:465.300px;top:1017px;width:116.400px"></div><div class="hl" style="left:465.300px;top:1041px;width:116.400px"></div><div class="hl" style="left:465.300px;top:1065px;width:116.400px"></div><div class="hl" style="left:465.300px;top:1089px;width:116.400px"></div><div class="hl" style="left:465.300px;top:1113px;width:116.400px"></div><div class="hl" style="left:465.300px;top:1137px;width:116.400px"></div><div class="hl" style="left:465.300px;top:1161px;width:116.400px"></div><div class="hl" style="left:465.300px;top:1185px;width:116.400px"></div><div class="hl" style="left:465.300px;top:1209px;width:116.400px"></div><div class="hl" style="left:465.300px;top:1233px;width:116.400px"></div>
<div class="hl" style="left:616.300px;top:88px;width:116.400px"></div><div class="hl" style="left:616.300px;top:112px;width:116.400px"></div><div class="hl" style="left:616.300px;top:136px;width:116.400px"></div><div class="hl" style="left:616.300px;top:160px;width:116.400px"></div><div class="hl" style="left:616.300px;top:184px;width:116.400px"></div><div class="hl" style="left:616.300px;top:208px;width:116.400px"></div><div class="hl" style="left:616.300px;top:232px;width:116.400px"></div><div class="hl" style="left:616.300px;top:256px;width:116.400px"></div><div class="hl" style="left:616.300px;top:280px;width:116.400px"></div><div class="hl" style="left:616.300px;top:304px;width:116.400px"></div><div class="hl" style="left:616.300px;top:328px;width:116.400px"></div><div class="hl" style="left:616.300px;top:352px;width:116.400px"></div><div class="hl" style="left:616.300px;top:376px;width:116.400px"></div><div class="hl" style="left:616.300px;top:400px;width:116.400px"></div><div class="hl" style="left:616.300px;top:424px;width:116.400px"></div><div class="hl" style="left:616.300px;top:448px;width:116.400px"></div><div class="hl" style="left:616.300px;top:472px;width:116.400px"></div><div class="hl" style="left:616.300px;top:496px;width:116.400px"></div><div class="hl" style="left:616.300px;top:520px;width:116.400px"></div><div class="hl" style="left:616.300px;top:544px;width:116.400px"></div><div class="hl" style="left:616.300px;top:568px;width:116.400px"></div><div class="hl" style="left:616.300px;top:592px;width:116.400px"></div><div class="hl" style="left:616.300px;top:616px;width:116.400px"></div><div class="hl" style="left:616.300px;top:640px;width:116.400px"></div><div class="hl" style="left:616.300px;top:664px;width:116.400px"></div><div class="hl" style="left:616.300px;top:688px;width:116.400px"></div><div class="hl" style="left:616.300px;top:712px;width:116.400px"></div><div class="hl" style="left:616.300px;top:736px;width:116.400px"></div><div class="hl" style="left:616.300px;top:760px;width:116.400px"></div><div class="hl" style="left:616.300px;top:784px;width:116.400px"></div><div class="hl" style="left:616.300px;top:808px;width:116.400px"></div><div class="hl" style="left:616.300px;top:832px;width:116.400px"></div><div class="hl" style="left:616.300px;top:856px;width:116.400px"></div><div class="hl" style="left:616.300px;top:880px;width:116.400px"></div><div class="hl" style="left:616.300px;top:904px;width:116.400px"></div><div class="hl" style="left:616.300px;top:928px;width:116.400px"></div><div class="hl" style="left:616.300px;top:952px;width:116.400px"></div><div class="hl" style="left:616.300px;top:976px;width:116.400px"></div><div class="hl" style="left:616.300px;top:1000px;width:116.400px"></div><div class="hl" style="left:616.300px;top:1024px;width:116.400px"></div><div class="hl" style="left:616.300px;top:1048px;width:116.400px"></div><div class="hl" style="left:616.300px;top:1072px;width:116.400px"></div><div class="hl" style="left:616.300px;top:1096px;width:116.400px"></div><div class="hl" style="left:616.300px;top:1120px;width:116.400px"></div><div class="hl" style="left:616.300px;top:1144px;width:116.400px"></div><div class="hl" style="left:616.300px;top:1168px;width:116.400px"></div><div class="hl" style="left:616.300px;top:1192px;width:116.400px"></div><div class="hl" style="left:616.300px;top:1216px;width:116.400px"></div><div class="hl" style="left:616.300px;top:1240px;width:116.400px"></div>
<svg style="left:432.600px;top:44.700px" width="16.800" height="16.200" viewBox="0 0 17 16"><path d="M8.500 0Q9.500 0 10 1L16.500 13.400Q17.200 15.800 15.200 16H1.800Q-.2 15.800 .5 13.400L7 1Q7.500 0 8.500 0Z" fill="#2e9780"/><rect x="7.300" y="4.400" width="2.400" height="6.400" rx=".9" fill="#fff"/><rect x="7.300" y="11.900" width="2.400" height="2.100" fill="#fff"/></svg>
<span class="t" style="left:452.00px;top:44px;letter-spacing:-0.100px;">Problems</span>
<svg style="left:527px;top:48.600px" width="15" height="13" viewBox="0 0 15 13"><rect x=".4" y=".4" width="13.200" height="6.600" fill="#f3f6fb" stroke="#b0a092" stroke-width=".8"/><rect x="7.600" y=".8" width="5.600" height="5.800" fill="#cfe0f2"/><rect x="1" y="1.700" width="6" height="3" fill="#4ca84a"/><path d="M1 2.600H7" stroke="#d9f0d4" stroke-width=".8"/><circle cx="10.700" cy="8.600" r="3.900" fill="#3fa23c"/><path d="M9.500 6.600L12.900 8.600 9.500 10.600Z" fill="#fff"/></svg>
<span class="t" style="left:544.06px;top:44px;transform:scaleX(0.9424);transform-origin:0 0;">Progress</span>
<div style="left:607px;top:37px;width:91px;height:31px;background:#fff;border-radius:6px 6px 0 0;border:1px solid #bfc3d3;border-bottom:none"></div>
<div style="left:608px;top:66px;width:89px;height:3px;background:#fff"></div>
<div style="left:429px;top:66px;width:178.7px;height:1px;background:#b5c0d4"></div>
<svg style="left:612.800px;top:44.800px" width="12.300" height="16.200" viewBox="0 0 12.300 16.200"><path d="M.6 4.600H4.900Q3.400 3.600 3.600 2.400Q4 .6 6.500 .6Q9 .6 9.400 2.400Q9.600 3.600 8.100 4.600H11.700V7.400H10.400Q7.600 7.400 7.600 10.200Q7.600 13 10.400 13H11.700V15.600H.6Z" fill="#fff" stroke="#2e9780" stroke-width="1.150" stroke-linejoin="round"/></svg>
<span class="t" style="left:631.30px;top:44px;transform:scaleX(0.9071);transform-origin:0 0;">Adc_1</span>
<svg style="left:678.600px;top:47.500px" width="10.600" height="10.800" viewBox="0 0 10.600 10.800"><path d="M.7 .7H3.200L5.300 3.100 7.400 .7H9.900V3.200L7.600 5.400 9.900 7.600V10.100H7.400L5.300 7.700 3.200 10.100H.7V7.600L3 5.400 .7 3.200Z" fill="#fff" stroke="#4b4b4b" stroke-width="1.050" stroke-linejoin="miter"/></svg>
<svg style="left:702.800px;top:44.800px" width="12.300" height="16.200" viewBox="0 0 12.300 16.200"><path d="M.6 4.600H4.900Q3.400 3.600 3.600 2.400Q4 .6 6.500 .6Q9 .6 9.400 2.400Q9.600 3.600 8.100 4.600H11.700V7.400H10.400Q7.600 7.400 7.600 10.200Q7.600 13 10.400 13H11.700V15.600H.6Z" fill="#d1deef" stroke="#2e9780" stroke-width="1.150" stroke-linejoin="round"/></svg>
<span class="t" style="left:720.26px;top:44px;transform:scaleX(0.9355);transform-origin:0 0;">IntCtrl_Ip_1</span>
</div>
<div class="grp" id="adc-form" role="form" aria-label="Adc_1 settings">
<span class="t" style="left:755.50px;top:73px;letter-spacing:-0.109px;">Adc Group Id</span>
<div style="left:1064px;top:70px;width:600px;height:24.8px;background:#fff;border-bottom:1.400px solid #737373"></div>
<span class="t" style="left:1069.70px;top:73px;">2</span>
<svg style="left:757.1px;top:106.2px" width="12" height="8" viewBox="0 0 12 8"><path d="M1.100 1.300L6 6.200 10.900 1.300" fill="none" stroke="#a6a6a6" stroke-width="2.400"/></svg>
<span class="t d" style="left:776.20px;top:101px;color:#a6a6a6;letter-spacing:-0.088px;">Adc Group Priority</span>
<div style="left:756.3px;top:131.3px;width:25.4px;height:27.2px;background:#f9f9f9;border:1px solid #e8e8e8;border-radius:4.500px"></div>
<svg style="left:762px;top:137.9px" width="14" height="14" viewBox="0 0 14 14"><path d="M7 0V14M0 7H14" stroke="#cbcbcb" stroke-width="1.700"/></svg>
<svg style="left:757.1px;top:176px" width="12" height="8" viewBox="0 0 12 8"><path d="M1.100 1.300L6 6.200 10.900 1.300" fill="none" stroke="#a6a6a6" stroke-width="2.400"/></svg>
<span class="t d" style="left:776.20px;top:171px;color:#a6a6a6;letter-spacing:-0.115px;">Adc Group Replacement</span>
<div style="left:756.3px;top:201.2px;width:25.4px;height:27.2px;background:#f9f9f9;border:1px solid #e8e8e8;border-radius:4.500px"></div>
<svg style="left:762px;top:207.8px" width="14" height="14" viewBox="0 0 14 14"><path d="M7 0V14M0 7H14" stroke="#cbcbcb" stroke-width="1.700"/></svg>
<span class="t" style="left:755.50px;top:243px;letter-spacing:-0.152px;">Adc Group Trigger Source</span>
<div style="left:1063.3px;top:240.3px;width:600px;height:24.5px;background:#fff;border:1px solid #8b8b8b"></div>
<span class="t" style="left:1069.40px;top:243px;transform:scaleX(0.8506);transform-origin:0 0;">ADC_TRIGG_SRC_SW</span>
<span class="t d" style="left:755.50px;top:273px;color:#a6a6a6;letter-spacing:-0.141px;">Adc Group Hardware Trigger Source</span>
<div style="left:1063.3px;top:270.3px;width:600px;height:24.5px;background:#f1f1f1;border:1px solid #a3a3a3"></div>
<svg style="left:757.1px;top:305.8px" width="12" height="8" viewBox="0 0 12 8"><path d="M1.100 1.300L6 6.200 10.900 1.300" fill="none" stroke="#a6a6a6" stroke-width="2.400"/></svg>
<span class="t d" style="left:776.20px;top:301px;color:#a6a6a6;letter-spacing:-0.075px;">Adc Group Hardware Trigger Signal</span>
<div style="left:756.3px;top:331.4px;width:25.4px;height:27.2px;background:#f9f9f9;border:1px solid #e8e8e8;border-radius:4.500px"></div>
<svg style="left:762px;top:338.0px" width="14" height="14" viewBox="0 0 14 14"><path d="M7 0V14M0 7H14" stroke="#cbcbcb" stroke-width="1.700"/></svg>
<svg style="left:757.1px;top:375.7px" width="12" height="8" viewBox="0 0 12 8"><path d="M1.100 1.300L6 6.200 10.900 1.300" fill="none" stroke="#a6a6a6" stroke-width="2.400"/></svg>
<span class="t d" style="left:776.20px;top:371px;color:#a6a6a6;letter-spacing:-0.027px;">Adc Group Trigger Timer</span>
<div style="left:756.3px;top:401.2px;width:25.4px;height:27.2px;background:#f9f9f9;border:1px solid #e8e8e8;border-radius:4.500px"></div>
<svg style="left:762px;top:407.8px" width="14" height="14" viewBox="0 0 14 14"><path d="M7 0V14M0 7H14" stroke="#cbcbcb" stroke-width="1.700"/></svg>
<svg style="left:757.1px;top:445.6px" width="12" height="8" viewBox="0 0 12 8"><path d="M1.100 1.300L6 6.200 10.900 1.300" fill="none" stroke="#2e9780" stroke-width="2.400"/></svg>
<span class="t" style="left:776.20px;top:441px;letter-spacing:0.214px;">Adc Group Notification</span>
<span class="t" style="left:755.50px;top:476px;letter-spacing:-0.500px;">0</span>
<div style="left:792px;top:473px;width:900px;height:24.3px;background:#fff;border-bottom:1.400px solid #737373"></div>
<span class="t" style="left:797.10px;top:476px;letter-spacing:0.109px;">IoHwAb_AdcNotification_0</span>
<div style="left:756.3px;top:506.2px;width:25.4px;height:27.2px;background:#f9f9f9;border:1px solid #e8e8e8;border-radius:4.500px"></div>
<svg style="left:762px;top:512.8px" width="14" height="14" viewBox="0 0 14 14"><path d="M7 0V14M0 7H14" stroke="#cbcbcb" stroke-width="1.700"/></svg>
<span class="t d" style="left:755.50px;top:549px;color:#a6a6a6;letter-spacing:0.033px;">Adc Group Extra Notification</span>
<div style="left:1064px;top:546px;width:600px;height:24px;background:#f1f1f1;border:1px solid #fbfbfb"></div>
<span class="t" style="left:1069.33px;top:549px;transform:scaleX(0.8720);transform-origin:0 0;color:#6d6d6d;">NULL_PTR</span>
<span class="t d" style="left:755.50px;top:579px;color:#a6a6a6;letter-spacing:-0.047px;">Adc Group Streaming Buffer Mode</span>
<div style="left:1063.3px;top:576.3px;width:600px;height:24.5px;background:#f1f1f1;border:1px solid #a3a3a3"></div>
<span class="t" style="left:1069.40px;top:579px;transform:scaleX(0.8695);transform-origin:0 0;color:#6d6d6d;">ADC_STREAM_BUFFER_LINEAR</span>
<span class="t d" style="left:755.50px;top:607px;color:#a6a6a6;letter-spacing:-0.110px;">Adc Enable Optimize Dma Streaming Groups</span>
<div style="left:1063.3px;top:608.5px;width:15.5px;height:15.5px;background:#f9f9f9;border:1px solid #c6c6c6;border-radius:3.500px"></div>
<span class="t d" style="left:755.50px;top:632px;color:#a6a6a6;letter-spacing:-0.063px;">Adc Group Enable Half Interrupt</span>
<div style="left:1063.3px;top:633.4px;width:15.5px;height:15.5px;background:#f9f9f9;border:1px solid #c6c6c6;border-radius:3.500px"></div>
<span class="t" style="left:755.50px;top:660px;letter-spacing:-0.112px;">Adc Group Streaming Number Samples</span>
<div style="left:1064px;top:657px;width:600px;height:24.9px;background:#fff;border-bottom:1.400px solid #737373"></div>
<span class="t" style="left:1070.40px;top:660px;letter-spacing:-1.400px;">1</span>
<span class="t d" style="left:755.50px;top:688px;color:#a6a6a6;letter-spacing:-0.235px;">Adc Group Streaming Results Reorder</span>
<div style="left:1063.3px;top:689.4px;width:15.5px;height:15.5px;background:#f9f9f9;border:1px solid #c6c6c6;border-radius:3.500px"></div>
<span class="t d" style="left:755.50px;top:713px;color:#a6a6a6;letter-spacing:-0.153px;">Adc Group Enable/Disable channels</span>
<div style="left:1063.3px;top:714.4px;width:15.5px;height:15.5px;background:#f9f9f9;border:1px solid #c6c6c6;border-radius:3.500px"></div>
<span class="t" style="left:755.50px;top:738px;">Adc Group Without Interrupts</span>
<div style="left:1063.3px;top:739.3px;width:15.5px;height:15.5px;background:#f6f6f6;border:1.100px solid #4a4a4a;border-radius:3.500px"></div>
<span class="t d" style="left:755.50px;top:763px;color:#a6a6a6;letter-spacing:-0.005px;">Adc Group Without Dma</span>
<div style="left:1063.3px;top:764.3px;width:15.5px;height:15.5px;background:#f9f9f9;border:1px solid #c6c6c6;border-radius:3.500px"></div>
<span class="t d" style="left:755.50px;top:788px;color:#a6a6a6;letter-spacing:-0.189px;">Adc External Dma Chan Config</span>
<div style="left:1063.3px;top:789.2px;width:15.5px;height:15.5px;background:#f9f9f9;border:1px solid #c6c6c6;border-radius:3.500px"></div>
<span class="t" style="left:755.50px;top:813px;letter-spacing:-0.169px;">Adc Group In Back to Back Mode</span>
<div style="left:1063.3px;top:814.2px;width:15.5px;height:15.5px;background:#0560b8;border-radius:3.500px"></div>
<svg style="left:1066.300px;top:818.2px" width="10" height="8" viewBox="0 0 10 8"><path d="M1 3.800L3.700 6.500 9 1.200" fill="none" stroke="#fff" stroke-width="1.050"/></svg>
<span class="t" style="left:755.50px;top:838px;transform:scaleX(0.9505);transform-origin:0 0;">Adc Group Uses Channel Delays</span>
<div style="left:1063.3px;top:839.2px;width:15.5px;height:15.5px;background:#0560b8;border-radius:3.500px"></div>
<svg style="left:1066.300px;top:843.2px" width="10" height="8" viewBox="0 0 10 8"><path d="M1 3.800L3.700 6.500 9 1.200" fill="none" stroke="#fff" stroke-width="1.050"/></svg>
<span class="t d" style="left:755.50px;top:866px;transform:scaleX(0.9638);transform-origin:0 0;color:#a6a6a6;">Adc Delay Next PDB</span>
<div style="left:1064px;top:863px;width:600px;height:24.5px;background:#f0f0f0;border:1px solid #fbfbfb"></div>
<span class="t" style="left:1070.20px;top:866px;color:#8a8a8a;letter-spacing:-0.500px;">0</span>
<span class="t d" style="left:755.50px;top:897px;color:#a6a6a6;letter-spacing:0.087px;">Adc Pdb Period For Continuous Conversions</span>
<div style="left:1064px;top:894px;width:600px;height:24.3px;background:#f0f0f0;border:1px solid #fbfbfb"></div>
<div style="left:755px;top:924.3px;width:900px;height:143.7px;border:1px solid #a4a4a6;box-shadow:inset 1px 1px 0 #fbfbfb, 0 1px 0 #fbfbfb"></div>
<svg style="left:767.3px;top:946.8px" width="12" height="8" viewBox="0 0 12 8"><path d="M1.100 1.300L6 6.200 10.900 1.300" fill="none" stroke="#2e9780" stroke-width="2.400"/></svg>
<span class="t" style="left:786.20px;top:942px;transform:scaleX(0.9281);transform-origin:0 0;font-weight:bold;">AdcChannelDelay</span>
<div style="left:765px;top:981.2px;width:900px;height:74.6px;background:#fff;border:1px solid #7d8591"></div>
<div style="left:786.2px;top:982.2px;width:1px;height:72.6px;background:#e6eaf2"></div>
<div style="left:836.3px;top:982.2px;width:1px;height:72.6px;background:#e6eaf2"></div>
<div style="left:767px;top:1009.3px;width:640px;height:22.8px;background:#dcdcdc"></div>
<div style="left:786.2px;top:1009.3px;width:1px;height:22.8px;background:#ececec"></div>
<div style="left:836.3px;top:1009.3px;width:1px;height:22.8px;background:#ececec"></div>
<div style="left:767.5px;top:1032px;width:900px;height:1px;background:#f0f0f0"></div>
<span class="t" style="left:793.20px;top:986px;letter-spacing:-1.100px;">#</span>
<span class="t" style="left:843.10px;top:986px;transform:scaleX(0.8908);transform-origin:0 0;">AdcChannelDelay</span>
<span class="t" style="left:793.20px;top:1012px;letter-spacing:-0.600px;">0</span>
<span class="t" style="left:842.10px;top:1012px;letter-spacing:-0.150px;">250</span>
<svg style="left:757.1px;top:1079px" width="12" height="8" viewBox="0 0 12 8"><path d="M1.100 1.300L6 6.200 10.900 1.300" fill="none" stroke="#a6a6a6" stroke-width="2.400"/></svg>
<span class="t d" style="left:776.20px;top:1074px;transform:scaleX(0.9598);transform-origin:0 0;color:#a6a6a6;font-weight:bold;">AdcGroupConversionConfiguration</span>
<div style="left:755px;top:1098px;width:900px;height:125.5px;border:1px solid #a4a4a6;box-shadow:inset 1px 1px 0 #fbfbfb, 0 1px 0 #fbfbfb"></div>
<span class="t d" style="left:764.50px;top:1109px;color:#a6a6a6;letter-spacing:-0.033px;">Name</span>
<span class="t d" style="left:765.50px;top:1137px;color:#a6a6a6;letter-spacing:-0.141px;">Adc Group Hardware Trigger Source</span>
<span class="t d" style="left:765.50px;top:1164px;color:#a6a6a6;letter-spacing:-0.078px;">Adc Group Hardware Trigger Signal</span>
<span class="t d" style="left:765.50px;top:1195px;color:#a6a6a6;letter-spacing:-0.074px;">Adc Sample Time Duration</span>
<div style="left:1064px;top:1105.5px;width:600px;height:24.3px;background:#f0f0f0;border:1px solid #fbfbfb"></div>
<div style="left:1063.3px;top:1161.2px;width:600px;height:24.7px;background:#f1f1f1;border:1px solid #a3a3a3"></div>
<div style="left:1064px;top:1192px;width:600px;height:24.3px;background:#f0f0f0;border:1px solid #fbfbfb"></div>
</div>
<div class="grp" id="param-tooltip" role="tooltip">
<div style="left:896px;top:883px;width:609px;height:360px;background:#ffffe1;border:1px solid #646464;box-shadow:0 -1px 0 #f9f9f9, 2px 3px 2.500px rgba(0,0,0,.5)"></div>
<span class="t" style="left:901.70px;top:887px;font-weight:bold;letter-spacing:-0.276px;">Adc Delay Next PDB</span>
<span class="t" style="left:1047.20px;top:887px;letter-spacing:0.029px;">[type:integer, id: AdcDelayNextPdb]</span>
<span class="t" style="left:906.00px;top:927px;letter-spacing:-0.159px;">The PDB unit can have one or more PDB Channels of 8 pretriggers each that will be used</span>
<span class="t" style="left:901.70px;top:947px;letter-spacing:-0.076px;">together for setting up conversions of large groups. The PDB Channels will be started</span>
<span class="t" style="left:901.70px;top:967px;letter-spacing:-0.097px;">together when the PDB unit is triggered, thus risking to request conversions at the same</span>
<span class="t" style="left:901.70px;top:987px;letter-spacing:-0.118px;">time and causing internal errors. For this reason, the value of AdcDelayNextPdb is needed</span>
<span class="t" style="left:901.70px;top:1007px;letter-spacing:-0.199px;">to be added as delay between PDB channels when Back to Back mode is used. The</span>
<span class="t" style="left:901.70px;top:1027px;letter-spacing:-0.088px;">AdcDelayNextPdb value should be greater than the timing to convert 8 channels. The</span>
<span class="t" style="left:900.70px;top:1047px;letter-spacing:0.010px;">maximum total conversion time is determined by the clock source chosen and the divide</span>
<span class="t" style="left:900.70px;top:1067px;letter-spacing:-0.162px;">ratio selected. The clock source is selectable by CFG1[ADICLK], and the divide ratio is</span>
<span class="t" style="left:901.70px;top:1087px;letter-spacing:-0.005px;">specified by CFG1[ADIV]. To calculate total conversion time for one channel the following</span>
<span class="t" style="left:901.70px;top:1107px;transform:scaleX(0.9587);transform-origin:0 0;">formula is applied: ADC TOTAL CONVERSION TIME = Sample Phase Time (set by</span>
<span class="t" style="left:900.70px;top:1127px;letter-spacing:-0.168px;">SMPLTS+1) + Hold Phase (1 ADC Cycle) + Compare Phase Time (8-bit Mode=20 ADC</span>
<span class="t" style="left:900.70px;top:1147px;letter-spacing:-0.123px;">Cycles, 10-bit Mode=24 ADC Cycles, 12-bit Mode=28 ADC Cycles) + Single or First</span>
<span class="t" style="left:901.70px;top:1167px;letter-spacing:-0.137px;">continuous time adder (5 ADC cycles + 5 bus clock cycles).</span>
</div>
</div>
</body>
</html>
